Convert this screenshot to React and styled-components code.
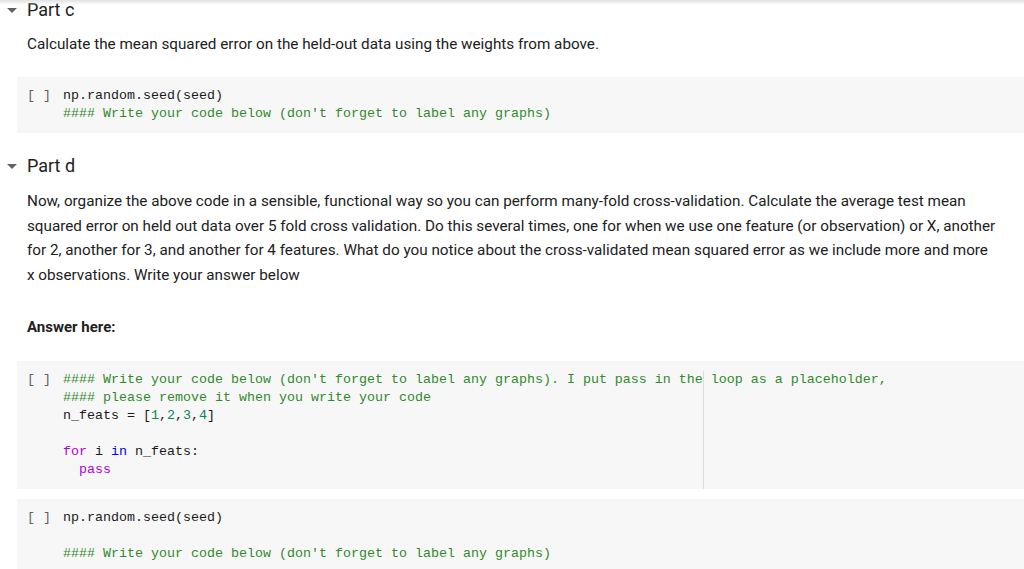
import React from 'react'
import styled, { createGlobalStyle } from 'styled-components'

const GlobalStyle = createGlobalStyle`
  html, body {
    margin: 0;
    padding: 0;
    background: #fff;
    overflow: hidden;
  }
  body {
    font-family: Roboto, "Noto Sans", sans-serif;
    color: #212121;
  }
`

const Page = styled.div`
  position: relative;
  width: 1024px;
  height: 569px;
  overflow: hidden;
`

const TopShadow = styled.div`
  position: absolute;
  top: 0;
  left: 0;
  right: 0;
  height: 5px;
  background: linear-gradient(#e2e2e2, rgba(255, 255, 255, 0));
  pointer-events: none;
`

const SectionHeader = styled.div`
  display: flex;
  align-items: center;
  height: 20px;
  margin-top: ${p => p.$top}px;
  font-size: 18px;
  line-height: 20px;
  color: #212121;
  .caret {
    width: 0;
    height: 0;
    margin: 0 10px 0 7px;
    border-left: 5px solid transparent;
    border-right: 5px solid transparent;
    border-top: 5px solid #5f6368;
  }
`

const TextCell = styled.div`
  margin-top: ${p => p.$top}px;
  padding-left: 27px;
  width: 972px;
  font-size: 15.25px;
  line-height: ${p => p.$lh || 24}px;
  color: #212121;
  p {
    margin: 0;
  }
  h4 {
    margin: 0;
    font-size: 15px;
    font-weight: 700;
    line-height: 24px;
  }
`

const CodeCell = styled.div`
  display: flex;
  margin-top: ${p => p.$top}px;
  margin-left: 17px;
  padding: 10px 0;
  background: #f7f7f7;
  font-family: "Liberation Mono", "Courier New", monospace;
  font-size: 13.33px;
  line-height: 18px;
  color: #1a1a1a;
`

const RunMark = styled.div`
  width: 24px;
  padding-left: 10px;
  margin-right: 12px;
  color: #616161;
  white-space: pre;
`

const Editor = styled.div`
  position: relative;
  flex: 1;
  white-space: pre;
  ${p => p.$ruler && `
    &::after {
      content: '';
      position: absolute;
      top: 0;
      bottom: -10px;
      left: 80ch;
      width: 1px;
      background: #dcdcdc;
    }
  `}
`

const Line = styled.div`
  height: 18px;
  padding-left: ${p => (p.$indent || 0) * 2}ch;
`

const Comment = styled.span`
  color: #2f8a2a;
`
const Num = styled.span`
  color: #098658;
`
const Kw = styled.span`
  color: ${p => (p.$blue ? '#0000ff' : '#af00db')};
`

const App = () => {
  return (
    <Page>
      <GlobalStyle />
      <SectionHeader $top={0}>
        <span className="caret" />
        Part c
      </SectionHeader>
      <TextCell $top={12}>
        <p>Calculate the mean squared error on the held-out data using the weights from above.</p>
      </TextCell>

      <CodeCell $top={21}>
        <RunMark>[ ]</RunMark>
        <Editor>
          <Line>np.random.seed(seed)</Line>
          <Line><Comment>#### Write your code below (don't forget to label any graphs)</Comment></Line>
        </Editor>
      </CodeCell>

      <SectionHeader $top={23}>
        <span className="caret" />
        Part d
      </SectionHeader>
      <TextCell $top={13} $lh={24.5}>
        <p>
          Now, organize the above code in a sensible, functional way so you can perform many-fold cross-validation. Calculate the average test mean squared error on held out data over 5 fold cross validation. Do this several times, one for when we use one feature (or observation) or X, another for 2, another for 3, and another for 4 features. What do you notice about the cross-validated mean squared error as we include more and more x observations. Write your answer below
        </p>
      </TextCell>
      <TextCell $top={28}>
        <h4>Answer here:</h4>
      </TextCell>

      <CodeCell $top={22}>
        <RunMark>[ ]</RunMark>
        <Editor $ruler>
          <Line><Comment>#### Write your code below (don't forget to label any graphs). I put pass in the loop as a placeholder,</Comment></Line>
          <Line><Comment>#### please remove it when you write your code</Comment></Line>
          <Line>n_feats = [<Num>1</Num>,<Num>2</Num>,<Num>3</Num>,<Num>4</Num>]</Line>
          <Line> </Line>
          <Line><Kw>for</Kw> i <Kw $blue>in</Kw> n_feats:</Line>
          <Line $indent={1}><Kw>pass</Kw></Line>
        </Editor>
      </CodeCell>

      <CodeCell $top={10}>
        <RunMark>[ ]</RunMark>
        <Editor>
          <Line>np.random.seed(seed)</Line>
          <Line> </Line>
          <Line><Comment>#### Write your code below (don't forget to label any graphs)</Comment></Line>
        </Editor>
      </CodeCell>
      <TopShadow />
    </Page>
  )
}

export default App
